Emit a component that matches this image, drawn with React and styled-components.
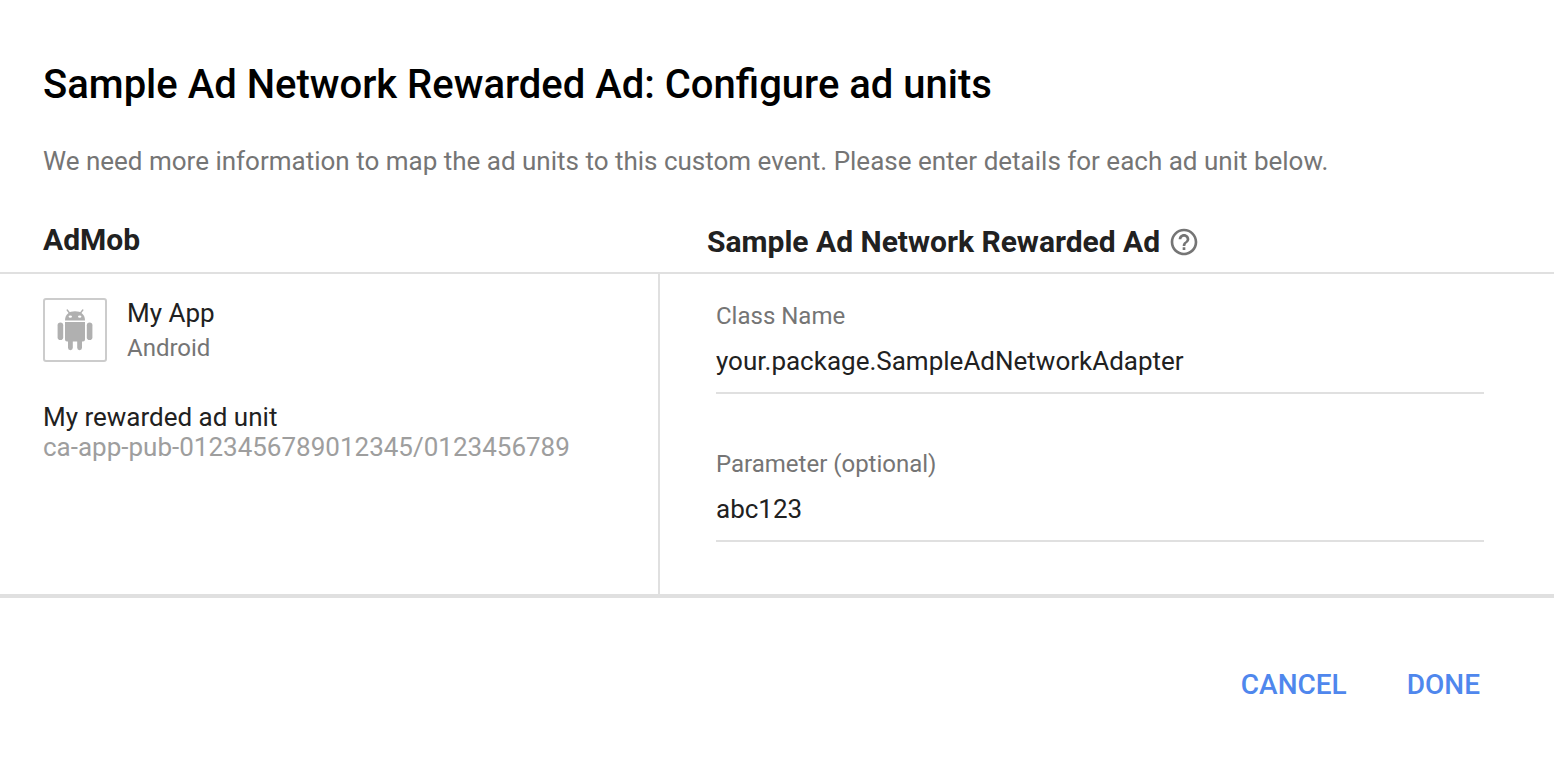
import React, { useState } from "react";
import styled, { createGlobalStyle } from "styled-components";
import { MdHelpOutline } from "react-icons/md";

const GlobalStyle = createGlobalStyle`
  * {
    box-sizing: border-box;
  }
  body {
    margin: 0;
    background-color: #ffffff;
    color: #212121;
    font-family: Roboto, "Liberation Sans", sans-serif;
    font-size: 26px;
    line-height: 30px;
  }
`;
const Dialog = styled.main`
  display: flex;
  flex-direction: column;
`;
const Header = styled.header`
  padding: 61px 43px 43px;
`;
const Title = styled.h1`
  margin: 0 0 36px;
  color: #000000;
  font-size: 40px;
  font-weight: 500;
  line-height: 48px;
`;
const Intro = styled.p`
  margin: 0;
  color: #757575;
  line-height: 32px;
`;
const Columns = styled.div`
  display: grid;
  grid-template-columns: 660px 1fr;
  border-bottom: 4px solid #e0e0e0;
`;
const ColumnTitle = styled.h2`
  display: flex;
  align-items: center;
  gap: 8px;
  height: 54px;
  margin: 0;
  padding: 0 0 ${({ $bottom }) => $bottom} ${({ $indent }) => $indent};
  border-bottom: 2px solid #e0e0e0;
  font-size: 30px;
  font-weight: 700;
`;
const HelpButton = styled.button`
  display: flex;
  padding: 0;
  border: 0;
  background: none;
  color: #757575;
  cursor: pointer;
`;
const AppPanel = styled.section`
  padding: 24px 43px;
  border-right: 2px solid #e0e0e0;
`;
const AppRow = styled.div`
  display: flex;
  gap: 20px;
  margin-bottom: 40px;
`;
const AppIcon = styled.div`
  display: flex;
  align-items: center;
  justify-content: center;
  width: 64px;
  height: 64px;
  border: 2px solid #cccccc;
  border-radius: 3px;
  color: #b0b0b0;
`;
const AppName = styled.div``;
const Platform = styled.div`
  margin-top: 6px;
  color: #757575;
  font-size: 24px;
  line-height: 28px;
`;
const UnitId = styled.div`
  color: #9e9e9e;
`;
const FieldPanel = styled.form`
  display: flex;
  flex-direction: column;
  gap: 56px;
  padding: 28px 70px 52px 56px;
`;
const Field = styled.div`
  display: flex;
  flex-direction: column;
`;
const Label = styled.label`
  color: #757575;
  font-size: 24px;
  line-height: 28px;
`;
const Input = styled.input`
  height: 64px;
  padding: 0;
  border: 0;
  border-bottom: 2px solid #e0e0e0;
  outline: none;
  background: none;
  color: #212121;
  font: inherit;
`;
const Actions = styled.footer`
  display: flex;
  justify-content: flex-end;
  gap: 60px;
  padding: 70px 74px 56px;
`;
const ActionButton = styled.button`
  padding: 0;
  border: 0;
  background: none;
  color: #4f87ed;
  font: inherit;
  font-size: 28px;
  font-weight: 500;
  line-height: 34px;
  cursor: pointer;
`;

const fields = [
  { id: "className", label: "Class Name" },
  { id: "parameter", label: "Parameter (optional)" },
];

function AndroidRobot() {
  return (
    <svg width="36" height="42" viewBox="0 0 36 42" aria-hidden="true">
      <g fill="currentColor">
        <path d="M8 11.500C8 5.500 12 2.200 18 2.200s10 3.300 10 9.300z" />
        <path d="M8 13h20v17.500a2 2 0 0 1-2 2h-1v6.300a2.400 2.400 0 0 1-4.800 0v-6.300h-4.400v6.300a2.400 2.400 0 0 1-4.800 0v-6.300h-1a2 2 0 0 1-2-2z" />
        <rect x="0.600" y="13.500" width="5.600" height="17.500" rx="2.800" />
        <rect x="29.800" y="13.500" width="5.600" height="17.500" rx="2.800" />
      </g>
      <path
        d="M10.200 1l2.300 3M25.800 1l-2.300 3"
        stroke="currentColor"
        strokeWidth="1.400"
        strokeLinecap="round"
      />
      <ellipse cx="13.300" cy="7.600" rx="1.700" ry="1.200" fill="#ffffff" />
      <ellipse cx="22.700" cy="7.600" rx="1.700" ry="1.200" fill="#ffffff" />
    </svg>
  );
}

export default function App() {
  const [values, setValues] = useState({
    className: "your.package.SampleAdNetworkAdapter",
    parameter: "abc123",
  });
  return (
    <Dialog>
      <GlobalStyle />
      <Header>
        <Title>Sample Ad Network Rewarded Ad: Configure ad units</Title>
        <Intro>
          We need more information to map the ad units to this custom event.
          Please enter details for each ad unit below.
        </Intro>
      </Header>
      <Columns>
        <ColumnTitle $indent="43px" $bottom="12px">
          AdMob
        </ColumnTitle>
        <ColumnTitle $indent="47px" $bottom="8px">
          Sample Ad Network Rewarded Ad
          <HelpButton type="button" aria-label="Help">
            <MdHelpOutline size={32} />
          </HelpButton>
        </ColumnTitle>
        <AppPanel>
          <AppRow>
            <AppIcon>
              <AndroidRobot />
            </AppIcon>
            <div>
              <AppName>My App</AppName>
              <Platform>Android</Platform>
            </div>
          </AppRow>
          <div>My rewarded ad unit</div>
          <UnitId>ca-app-pub-0123456789012345/0123456789</UnitId>
        </AppPanel>
        <FieldPanel id="adUnitForm" onSubmit={(e) => e.preventDefault()}>
          {fields.map((field) => (
            <Field key={field.id}>
              <Label htmlFor={field.id}>{field.label}</Label>
              <Input
                id={field.id}
                value={values[field.id]}
                spellCheck={false}
                onChange={(e) =>
                  setValues({ ...values, [field.id]: e.target.value })
                }
              />
            </Field>
          ))}
        </FieldPanel>
      </Columns>
      <Actions>
        <ActionButton type="button">CANCEL</ActionButton>
        <ActionButton type="submit" form="adUnitForm">
          DONE
        </ActionButton>
      </Actions>
    </Dialog>
  );
}
